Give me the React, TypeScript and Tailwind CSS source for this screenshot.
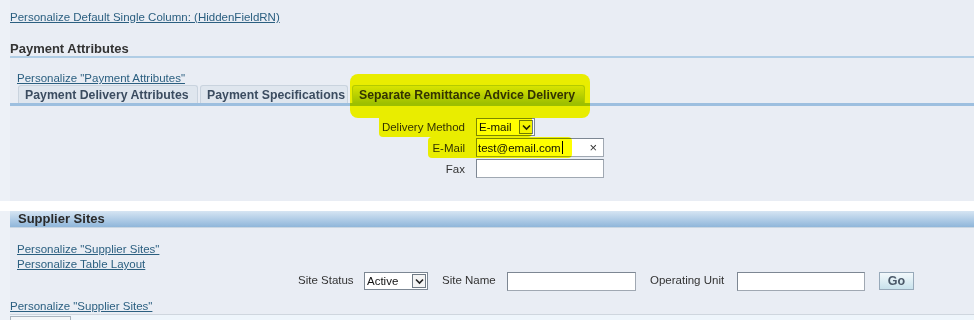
import React from "react";

const font = { fontFamily: '"Liberation Sans", Arial, sans-serif' };

function Link({ children }: { children: React.ReactNode }) {
  return <a className="text-[#2b5f80] underline underline-offset-[1px] whitespace-nowrap">{children}</a>;
}

function Select({ value, w }: { value: string; w: string }) {
  return (
    <div className={`flex h-[18px] ${w} items-stretch border border-[#7c8793] bg-white`}>
      <div className="flex-1 pl-[2px] text-[11.5px] leading-[16px] text-[#111]">{value}</div>
      <div className="m-[1px] flex w-[14px] items-center justify-center border border-[#6f7a85] bg-[#f4f4f4]">
        <svg width="9" height="7" viewBox="0 0 9 7">
          <path d="M1 1.5 L4.5 5 L8 1.5" stroke="#222" strokeWidth="1.6" fill="none" />
        </svg>
      </div>
    </div>
  );
}

function Input({ value, w = "w-[128px]", clear = false }: { value?: string; w?: string; clear?: boolean }) {
  return (
    <div className={`flex h-[19px] ${w} items-center border border-[#a0a8b2] border-t-[#7d8793] border-l-[#7d8793] bg-white`}>
      <div className="flex-1 pl-[1px] text-[11.5px] leading-[16px] text-[#111]">
        {value}
        {value && <span className="ml-[1px] inline-block h-[13px] w-[1px] translate-y-[2px] bg-black" />}
      </div>
      {clear && <span className="pr-[6px] text-[13px] leading-[13px] text-[#333]">×</span>}
    </div>
  );
}

function Tab({ label, w, selected = false, className = "" }: { label: string; w: string; selected?: boolean; className?: string }) {
  return (
    <div
      className={`flex h-[18px] ${w} ${className} items-center rounded-t-[3px] border border-b-0 pl-[6px] text-[12.3px] font-bold leading-[14px] whitespace-nowrap ${
        selected
          ? "border-[#b3cbe2] bg-gradient-to-b from-[#d8e4f0] to-[#9fc0df] text-[#333]"
          : "border-[#c9d3de] bg-[#dfe6ee] text-[#3b4c60]"
      }`}
    >
      {label}
    </div>
  );
}

export default function App() {
  return (
    <div className="relative h-[320px] w-[974px] overflow-hidden bg-[#edf1f7] text-[11.5px]" style={font}>
      {/* Payment Attributes panel */}
      <div className="ml-[10px] flex h-[201px] flex-col bg-[#e9edf4]">
        <div className="mt-[10px] h-[14px] leading-[14px]">
          <Link>Personalize Default Single Column: (HiddenFieldRN)</Link>
        </div>
        <div className="mt-[17px] h-[17px] border-b-2 border-[#b0cde5] text-[13px] font-bold leading-[15px] text-[#333]">
          Payment Attributes
        </div>
        <div className="mt-[13px] h-[14px] pl-[7px] leading-[14px]">
          <Link>Personalize "Payment Attributes"</Link>
        </div>
        <div className="ml-[8px] flex items-end">
          <Tab label="Payment Delivery Attributes" w="w-[180px]" />
          <Tab label="Payment Specifications" w="w-[148px]" className="ml-[2px]" />
          <Tab label="Separate Remittance Advice Delivery" w="w-[233px]" className="ml-[4px]" selected />
        </div>
        <div className="h-[3px] bg-[#9dbfdf]" />
        <div className="mt-[12px] grid grid-cols-[455px_auto] items-center gap-x-[11px] gap-y-[2px] leading-[18px] text-[#333]">
          <div className="text-right">Delivery Method</div>
          <Select value="E-mail" w="w-[59px]" />
          <div className="text-right">E-Mail</div>
          <Input value="test@email.com" clear />
          <div className="text-right">Fax</div>
          <Input />
        </div>
      </div>

      <div className="h-[10px] bg-white" />

      {/* Supplier Sites */}
      <div className="ml-[10px] flex h-[17px] items-center border-b border-[#c9d6e2] bg-gradient-to-b from-[#d6e5f3] to-[#8fb6da] pl-[8px] text-[13px] font-bold text-[#2a2a2a]">
        Supplier Sites
      </div>
      <div className="ml-[10px] flex h-[86px] flex-col bg-[#e9edf4]">
        <div className="mt-[14px] flex flex-col pl-[7px] leading-[15px]">
          <Link>Personalize "Supplier Sites"</Link>
          <Link>Personalize Table Layout</Link>
        </div>
        <div className="flex h-[18px] items-center text-[#333]">
          <span className="ml-[288px] w-[66px]">Site Status</span>
          <Select value="Active" w="w-[64px]" />
          <span className="ml-[14px] w-[65px]">Site Name</span>
          <Input w="w-[129px]" />
          <span className="ml-[14px] w-[87px]">Operating Unit</span>
          <Input w="w-[128px]" />
          <button className="ml-[14px] h-[18px] w-[35px] border border-[#97a9b9] bg-gradient-to-b from-[#f3f9fc] to-[#c8e2ec] text-[12.5px] font-bold leading-[14px] text-[#4a5868]">
            Go
          </button>
        </div>
        <div className="mt-[9px] h-[14px] leading-[14px]">
          <Link>Personalize "Supplier Sites"</Link>
        </div>
      </div>
      <div className="ml-[10px] h-[10px] border-t border-[#cfd6de] bg-[#eef5fb] pt-[1px]">
        <div className="h-[10px] w-[61px] border border-[#aab3bd] bg-[#f4f6f8]" />
      </div>

      {/* highlighter strokes */}
      <div className="pointer-events-none absolute left-[350px] top-[74px] h-[44px] w-[240px] rounded-[8px] bg-[#ffff00] mix-blend-multiply" />
      <div className="pointer-events-none absolute left-[379px] top-[112px] h-[25px] w-[153px] rounded-[4px] bg-[#ffff00] mix-blend-multiply" />
      <div className="pointer-events-none absolute left-[428px] top-[137px] h-[21px] w-[144px] rounded-[4px] bg-[#ffff00] mix-blend-multiply" />
    </div>
  );
}
